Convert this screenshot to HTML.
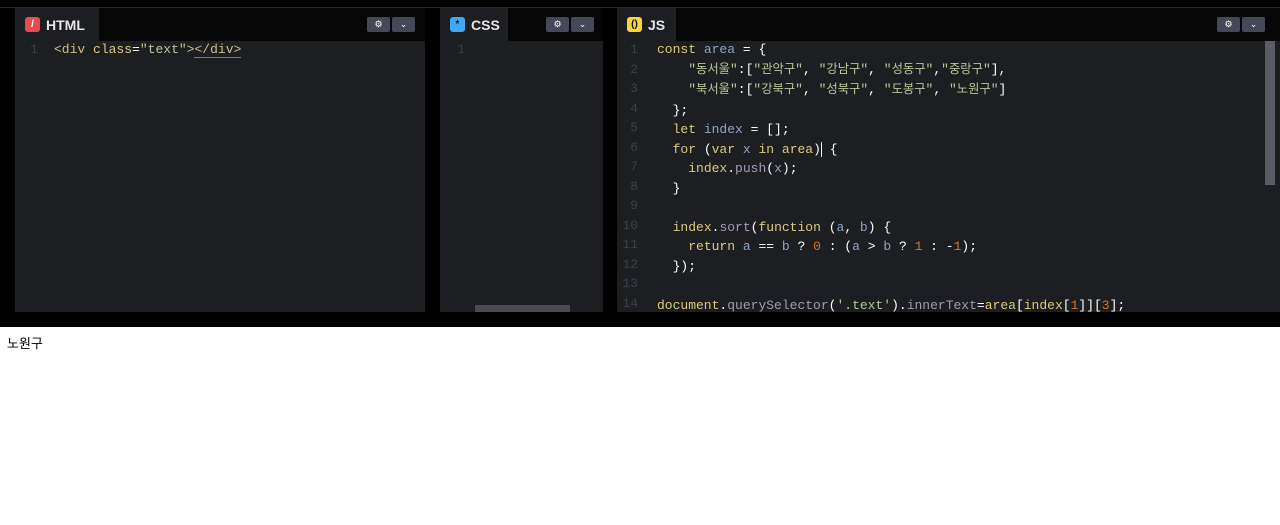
<!DOCTYPE html>
<html><head><meta charset="utf-8"><style>
*{margin:0;padding:0;box-sizing:border-box}
body{width:1280px;height:525px;overflow:hidden;background:#fff;font-family:"Liberation Sans","Noto Sans CJK KR",sans-serif;position:relative}
.top{position:absolute;left:0;top:0;width:1280px;height:327px;background:#000}
.line{position:absolute;left:0;top:7px;width:1280px;height:1px;background:#2a2a2e}
.panel{position:absolute;top:8px;height:304px;background:#1d1e22;overflow:hidden}
.hdr{position:absolute;left:0;top:0;right:0;height:33px;background:#060606}
.tab{position:absolute;left:0;top:0;height:33px;background:#1d1e22;color:#e6e6ea;font-weight:bold;font-size:14px;line-height:34px;padding-left:31px}
.ic{position:absolute;left:10px;top:9px;width:15px;height:15px;border-radius:3px;font-size:10px;line-height:15px;text-align:center;color:#111}
.btn{position:absolute;top:9px;height:15px;width:23px;background:#444857;border-radius:2px;color:#fff;font-size:9px;line-height:15px;text-align:center}
.code{position:absolute;top:32px;left:0;right:0;font-family:"Liberation Mono","Noto Sans CJK KR",monospace;font-size:13px;line-height:19.5px;color:#fff;white-space:pre;padding-top:0}
.ln{position:absolute;color:#3d3f47;text-align:right;width:25px}
.k{color:#ddca7e}.v{color:#8fa4c4}.s{color:#b5c89a}.n{color:#d0782a}.p{color:#a29bb3}.t{color:#ddca7e}
.h{font-size:12.3px}
</style></head><body>
<div class="top"></div><div class="line"></div>

<div class="panel" style="left:15px;width:410px">
 <div class="hdr"></div>
 <div class="tab" style="width:84px"><span class="ic" style="background:#e44d4d;color:#fff">/</span>HTML</div>
 <div class="btn" style="left:352px">⚙</div><div class="btn" style="left:377px">⌄</div>
 <div class="code"><span class="ln" style="left:0;width:23px">1</span><span style="position:absolute;left:39px"><span style="color:#ccbf8a">&lt;div</span> <span class="k">class</span>=<span class="s">"text"</span><span style="color:#ccbf8a">&gt;<span style="border-bottom:1px solid #777">&lt;/div&gt;</span></span></span></div>
</div>

<div class="panel" style="left:440px;width:163px">
 <div class="hdr"></div>
 <div class="tab" style="width:68px"><span class="ic" style="background:#3ea9f5">*</span>CSS</div>
 <div class="btn" style="left:106px">⚙</div><div class="btn" style="left:131px">⌄</div>
 <div class="code"><span class="ln" style="left:0">1</span></div>
 <div style="position:absolute;left:35px;top:297px;width:95px;height:7px;background:#4a4b52"></div>
</div>

<div class="panel" style="left:617px;width:663px">
 <div class="hdr"></div>
 <div class="tab" style="width:59px"><span class="ic" style="background:#f7d440">()</span>JS</div>
 <div class="btn" style="left:600px">⚙</div><div class="btn" style="left:625px">⌄</div>
 <div style="position:absolute;left:648px;top:33px;width:10px;height:144px;background:#5a5c66"></div>
 <div class="code" style="left:0"><span class="ln" style="left:-4px;top:0px">1</span><span class="ln" style="left:-4px;top:19.5px">2</span><span class="ln" style="left:-4px;top:39px">3</span><span class="ln" style="left:-4px;top:58.5px">4</span><span class="ln" style="left:-4px;top:78px">5</span><span class="ln" style="left:-4px;top:97.5px">6</span><span class="ln" style="left:-4px;top:117px">7</span><span class="ln" style="left:-4px;top:136.5px">8</span><span class="ln" style="left:-4px;top:156px">9</span><span class="ln" style="left:-4px;top:175.5px">10</span><span class="ln" style="left:-4px;top:195px">11</span><span class="ln" style="left:-4px;top:214.5px">12</span><span class="ln" style="left:-4px;top:234px">13</span><span class="ln" style="left:-4px;top:253.5px">14</span><div style="margin-left:40px"><span class="k">const</span> <span class="v">area</span> = {
    <span class="s">"<span class="h">동서울</span>"</span>:[<span class="s">"<span class="h">관악구</span>"</span>, <span class="s">"<span class="h">강남구</span>"</span>, <span class="s">"<span class="h">성동구</span>"</span>,<span class="s">"<span class="h">중랑구</span>"</span>],
    <span class="s">"<span class="h">북서울</span>"</span>:[<span class="s">"<span class="h">강북구</span>"</span>, <span class="s">"<span class="h">성북구</span>"</span>, <span class="s">"<span class="h">도봉구</span>"</span>, <span class="s">"<span class="h">노원구</span>"</span>]
  };
  <span class="k">let</span> <span class="v">index</span> = [];
  <span class="k">for</span> (<span class="k">var</span> <span class="v">x</span> <span class="k">in</span> <span class="t">area</span>)<span style="border-left:1px solid #fff"></span> {
    <span class="t">index</span>.<span class="p">push</span>(<span class="v">x</span>);
  }

  <span class="t">index</span>.<span class="p">sort</span>(<span class="k">function</span> (<span class="v">a</span>, <span class="v">b</span>) {
    <span class="k">return</span> <span class="v">a</span> == <span class="v">b</span> ? <span class="n">0</span> : (<span class="v">a</span> &gt; <span class="v">b</span> ? <span class="n">1</span> : -<span class="n">1</span>);
  });

<span class="t">document</span>.<span class="p">querySelector</span>(<span class="s">'.text'</span>).<span class="p">innerText</span>=<span class="t">area</span>[<span class="t">index</span>[<span class="n">1</span>]][<span class="n">3</span>];</div></div>
</div>

<div style="position:absolute;left:7px;top:333px;font-size:13px;color:#000">노원구</div>
</body></html>
